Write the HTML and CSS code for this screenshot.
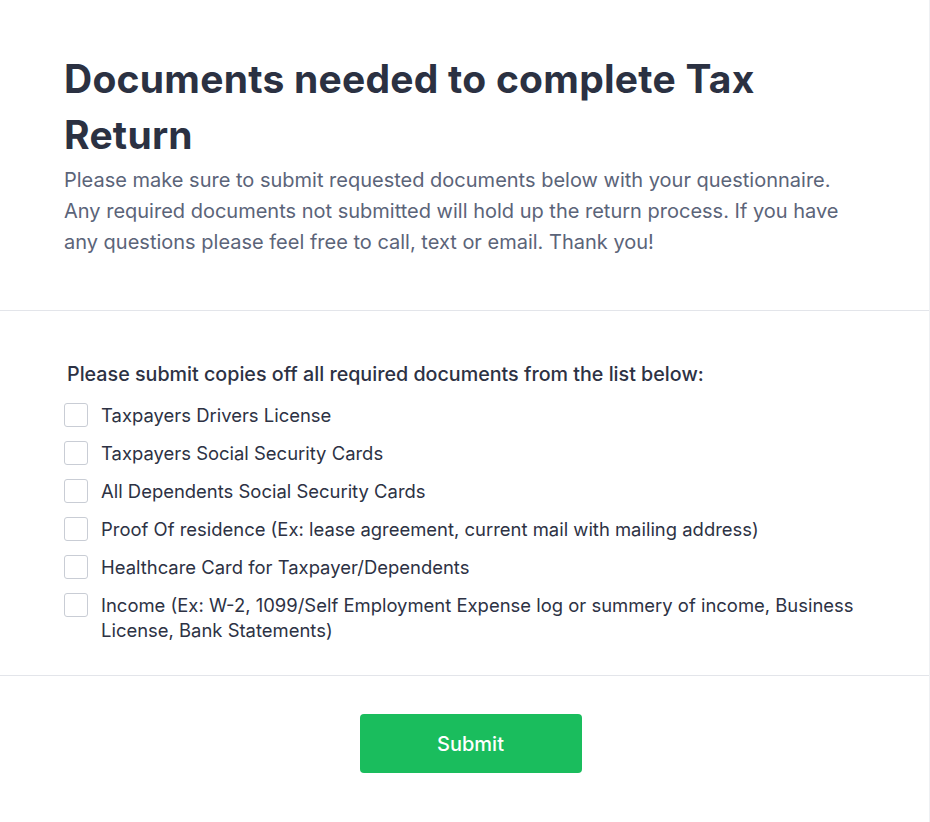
FILE: index.html
```html
<!DOCTYPE html>
<html lang="en">
<head>
<meta charset="utf-8">
<title>Documents needed to complete Tax Return</title>
<link rel="stylesheet" href="styles.css">
</head>
<body>
<main class="card">
  <header class="intro">
    <h1 class="title">Documents needed to complete Tax Return</h1>
    <p class="lead">Please make sure to submit requested documents below with your questionnaire. Any required documents not submitted will hold up the return process. If you have any questions please feel free to call, text or email. Thank you!</p>
  </header>
  <section class="docs">
    <h2 class="docs-heading">Please submit copies off all required documents from the list below:</h2>
    <ul class="checklist">
      <li class="item"><span class="box"></span><span class="label">Taxpayers Drivers License</span></li>
      <li class="item"><span class="box"></span><span class="label">Taxpayers Social Security Cards</span></li>
      <li class="item"><span class="box"></span><span class="label">All Dependents Social Security Cards</span></li>
      <li class="item"><span class="box"></span><span class="label">Proof Of residence (Ex: lease agreement, current mail with mailing address)</span></li>
      <li class="item"><span class="box"></span><span class="label">Healthcare Card for Taxpayer/Dependents</span></li>
      <li class="item"><span class="box"></span><span class="label">Income (Ex: W-2, 1099/Self Employment Expense log or summery of income, Business License, Bank Statements)</span></li>
    </ul>
  </section>
  <footer class="actions">
    <button class="submit" type="button">Submit</button>
  </footer>
</main>
</body>
</html>
```

FILE: styles.css
```css
* { box-sizing: border-box; }
html, body { margin: 0; padding: 0; background: #ffffff; }
body {
  font-family: Inter, "Noto Sans", sans-serif;
  color: #2d3244;
}
.card {
  width: 930px;
  min-height: 822px;
  border-right: 1px solid #eef0f3;
  display: flex;
  flex-direction: column;
}
.intro {
  padding: 51px 64px 52px 64px;
  border-bottom: 1px solid #e3e5ea;
}
.title {
  margin: 0;
  font-size: 39px;
  line-height: 56px;
  font-weight: 700;
  letter-spacing: 0.25px;
  color: #2b3142;
}
.lead {
  margin: 2px 0 0 0;
  font-size: 20px;
  line-height: 31px;
  color: #5b6479;
}
.docs {
  padding: 49px 64px 32px 64px;
  border-bottom: 1px solid #e3e5ea;
}
.docs-heading {
  margin: 0 0 15px 0;
  padding-left: 3px;
  font-size: 19.7px;
  line-height: 28px;
  font-weight: 500;
  color: #2d3244;
}
.checklist {
  list-style: none;
  margin: 0;
  padding: 0;
  display: flex;
  flex-direction: column;
  gap: 13px;
}
.item {
  display: flex;
  align-items: flex-start;
  gap: 13px;
}
.box {
  flex: 0 0 24px;
  width: 24px;
  height: 24px;
  border: 1px solid #c9cdd5;
  border-radius: 3px;
  background: #fff;
}
.label {
  font-size: 18.45px;
  line-height: 25px;
  color: #2d3244;
}
.actions {
  flex: 1;
  display: flex;
  justify-content: center;
  align-items: flex-start;
  padding: 38px 0 0 12px;
}
.submit {
  width: 222px;
  height: 59px;
  border: none;
  border-radius: 4px;
  background: #1abd5d;
  color: #ffffff;
  font-family: Inter, "Noto Sans", sans-serif;
  font-size: 20px;
  font-weight: 500;
  cursor: pointer;
}
```
